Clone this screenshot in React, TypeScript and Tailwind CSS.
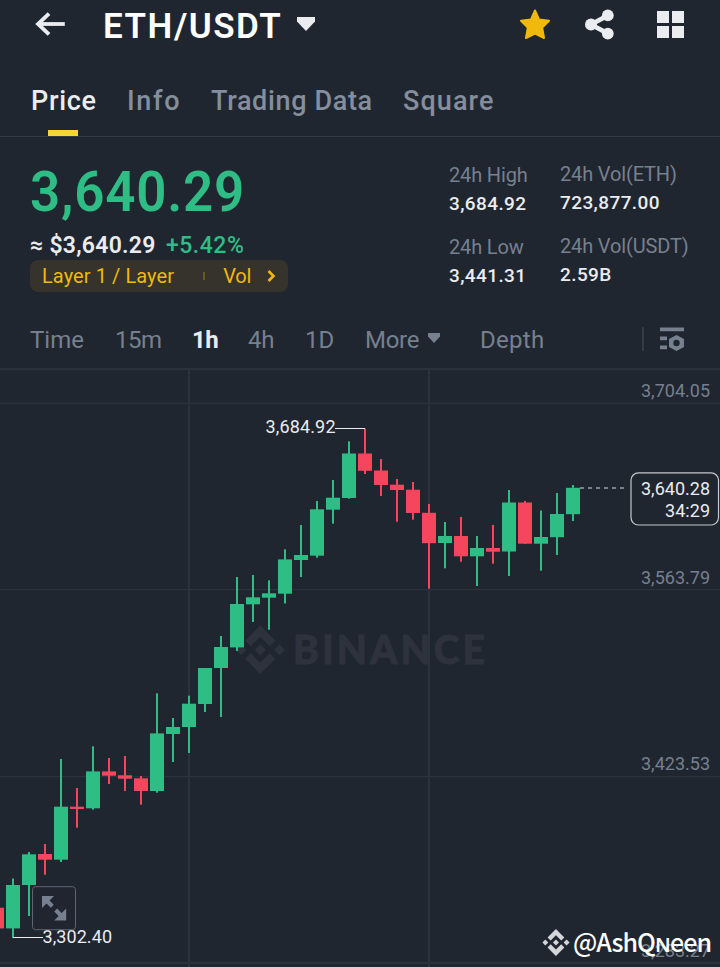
import React from 'react';

type Candle = { x: number; top: number; bottom: number; high: number; low: number; up: boolean };

const UP = '#2ebd85';
const DOWN = '#f6465d';

// x, body top, body bottom, wick top, wick bottom, rising
const RAW: [number, number, number, number, number, boolean][] = [
    [-3, 907.7, 928.4, 907.7, 928.4, false],
    [13, 885, 928.4, 878.5, 938, true],
    [29, 854.3, 885, 852, 916, true],
    [45, 854, 859.7, 844, 874.7, false],
    [61, 806.7, 859.7, 759, 862, true],
    [77, 806.7, 809, 788, 827.7, false],
    [93, 771.4, 808.3, 746.3, 809.7, true],
    [109, 771.4, 775.7, 758, 784, false],
    [125, 775.3, 778.7, 756, 791, false],
    [141, 778.3, 791, 776, 804.7, false],
    [157, 733.4, 791, 693.3, 792.7, true],
    [173, 727, 734, 718, 762, true],
    [189, 703.7, 727, 695.7, 753, true],
    [205, 668, 704, 668, 712, true],
    [221, 647, 668, 636, 717, true],
    [237, 604, 647.4, 577, 651, true],
    [253, 597.3, 604.3, 575, 622, true],
    [269, 593.3, 597.7, 580.3, 629.7, true],
    [285, 559.4, 593.7, 549.3, 603.5, true],
    [301, 555, 560, 525, 577, true],
    [317, 509.3, 555.7, 501, 557.7, true],
    [333, 497.7, 509.7, 480, 523.7, true],
    [349, 453.5, 498, 441.3, 498.7, true],
    [365, 453.5, 470.8, 428.5, 474, false],
    [381, 470.5, 485, 459, 496, false],
    [397, 484.7, 490, 479, 521.7, false],
    [413, 489.7, 513, 482, 519.7, false],
    [429, 512.8, 543.2, 504, 588.7, false],
    [445, 536, 543, 522, 568.3, true],
    [461, 536, 556.3, 517, 561.7, false],
    [477, 548, 556.3, 536, 586, true],
    [493, 548, 551.7, 525, 563.7, false],
    [509, 502.5, 551.5, 490, 576, true],
    [525, 502.5, 543.7, 501, 543.7, false],
    [541, 537, 543.7, 510.5, 570.7, true],
    [557, 514, 537.2, 493, 555, true],
    [573, 487.8, 514.2, 485, 521, true],
];

const candles: Candle[] = RAW.map(([x, top, bottom, high, low, up]) => ({ x, top, bottom, high, low, up }));

const StatItem: React.FC<{ label: string; value: string }> = ({ label, value }) => (
    <div className="whitespace-nowrap">
        <p className="text-[20px] leading-[28px] tracking-[-0.15px] text-[#76808f]">{label}</p>
        <p className="pt-px text-[19px] leading-[27px] font-medium tracking-[0.4px] text-[#eaecef]">{value}</p>
    </div>
);

// Binance diamond, drawn in a 48x48 box
const Diamond: React.FC = () => (
    <>
        <path d="M24 0 L39 15 L33.4 20.6 L24 11.2 L14.6 20.6 L9 15Z" />
        <path d="M24 48 L39 33 L33.4 27.4 L24 36.8 L14.6 27.4 L9 33Z" />
        <path d="M24 18.6 L29.4 24 L24 29.4 L18.6 24Z" />
        <path d="M5 18.8 L0 24 L5 29.4 L10.2 24Z" />
        <path d="M43 18.8 L48.4 24 L43 29.4 L37.8 24Z" />
    </>
);

const Header: React.FC = () => (
    <header className="flex h-[52px] items-center pl-[35px] pr-9">
        <svg width="30" height="24" viewBox="0 0 30 24" fill="none" stroke="#eaecef" strokeWidth="3.8" className="mb-1">
            <path d="M29.8 12H3" />
            <path d="M14 1.6L3 12L14 22.4" />
        </svg>
        <h1 className="ml-[38px] w-[194px] whitespace-nowrap text-[35px] leading-none font-semibold tracking-[1.5px] text-white">ETH/USDT</h1>
        <svg width="18" height="14" viewBox="0 0 18 14" fill="#eaecef" className="mb-1">
            <path d="M0 0H18V4.5L9 14L0 4.5Z" />
        </svg>
        <div className="mb-1 ml-auto flex items-center">
            <svg width="30" height="31" viewBox="0 0 30 31" fill="#f0b90b" stroke="#f0b90b" strokeWidth="2" strokeLinejoin="round">
                <path d="M15 1.5L19 10.5L29 11.8L22.2 18.6L24 29L15 24.6L6 29L7.8 18.6L1 11.8L11 10.5Z" />
            </svg>
            <svg width="30" height="31" viewBox="0 0 30 31" fill="#eaecef" className="ml-[35px]">
                <path d="M6 15.5L23 6.4M6 15.5L23 24.6" stroke="#eaecef" strokeWidth="4.6" />
                <circle cx="6" cy="15.5" r="6" />
                <circle cx="22.8" cy="6.4" r="5.9" />
                <circle cx="22.8" cy="24.6" r="5.9" />
            </svg>
            <div className="ml-[42px] grid grid-cols-2 gap-[3px]">
                <i className="h-3 w-3 bg-[#eaecef]" />
                <i className="h-3 w-3 bg-[#eaecef]" />
                <i className="h-3 w-3 bg-[#eaecef]" />
                <i className="h-3 w-3 bg-[#eaecef]" />
            </div>
        </div>
    </header>
);

const Tabs: React.FC = () => (
    <nav className="flex h-[85px] items-start border-b border-[#333b47] pl-[31px] text-[27px] leading-[36px] font-medium whitespace-nowrap text-[#848e9c]">
        <div className="flex h-[84px] w-[96px] flex-col pt-[31px] text-[#eaecef]">
            <span className="tracking-[0.7px]">Price</span>
            <span className="mt-[11px] ml-[17px] h-1.5 w-[30px] bg-[#fcd535]" />
        </div>
        <span className="w-[84px] pt-[31px] tracking-[1.7px]">Info</span>
        <span className="w-[192px] pt-[31px] tracking-[0.65px]">Trading Data</span>
        <span className="pt-[31px] tracking-[1.1px]">Square</span>
    </nav>
);

const Summary: React.FC = () => (
    <section className="flex h-[173px] pl-[30px]">
        <div className="w-[419px] whitespace-nowrap">
            <p className="mt-[25px] origin-left scale-x-[0.945] text-[56px] leading-[60px] font-semibold tracking-[0.8px] text-[#2ebd85]">3,640.29</p>
            <p className="mt-[10px] flex text-[23px] leading-[28px] font-semibold">
                <span className="w-[136px] tracking-[0.25px] text-[#eaecef]">≈ $3,640.29</span>
                <span className="font-medium tracking-[0.5px] text-[#2ebd85]">+5.42%</span>
            </p>
            <div className="flex h-8 w-[258px] items-center rounded-lg bg-[#35332c] px-3 text-[20px] leading-none text-[#f0b90b]">
                <span className="w-[162px] tracking-[0.08px]">Layer 1 / Layer</span>
                <span className="h-2 w-0.5 bg-[#6b5720]" />
                <span className="ml-[18px] w-[44px] tracking-[-0.2px]">Vol</span>
                <svg width="9" height="12" viewBox="0 0 9 12" fill="none" stroke="#f0b90b" strokeWidth="2.6">
                    <path d="M1.5 1L6.5 6L1.5 11" />
                </svg>
            </div>
        </div>
        <div className="flex w-[111px] flex-col gap-4 pt-6">
            <StatItem label="24h High" value="3,684.92" />
            <StatItem label="24h Low" value="3,441.31" />
        </div>
        <div className="flex flex-col gap-4 pt-[23px]">
            <StatItem label="24h Vol(ETH)" value="723,877.00" />
            <StatItem label="24h Vol(USDT)" value="2.59B" />
        </div>
    </section>
);

const Intervals: React.FC = () => (
    <div className="flex h-[58px] items-center pt-px pl-[30px] text-[24px] leading-[28px] whitespace-nowrap text-[#76808f]">
        <span className="w-[85px]">Time</span>
        <span className="w-[77px] tracking-[-0.5px]">15m</span>
        <span className="w-[56px] font-bold tracking-[-0.5px] text-[#eaecef]">1h</span>
        <span className="w-[57px] tracking-[-0.3px]">4h</span>
        <span className="w-[60px]">1D</span>
        <span className="w-[63px] tracking-[-0.3px]">More</span>
        <svg width="12" height="10" viewBox="0 0 12 10" fill="#76808f" className="mb-1">
            <path d="M0 0H12V3.4L6 10L0 3.4Z" />
        </svg>
        <span className="ml-[40px] w-[162px] tracking-[0.3px]">Depth</span>
        <span className="mb-0.5 h-6 w-0.5 bg-[#333b47]" />
        <svg width="24" height="24" viewBox="0 0 24 24" fill="#76808f" className="mb-px ml-4">
            <path d="M0 0.5H24V4.3H0Z M0 9.5H7V13.3H0Z M0 18.5H7V22.3H0Z" />
            <path fillRule="evenodd" d="M16.5 8L24 12V20L16.5 24L9 20V12Z M16.5 12.8A3.2 3.2 0 1 0 16.5 19.2A3.2 3.2 0 1 0 16.5 12.8Z" />
        </svg>
    </div>
);

const Chart: React.FC = () => (
    <svg width="720" height="599" viewBox="0 368 720 599" className="block" fontFamily="Roboto, sans-serif" fontSize="18">
        <g fill="#2c323d">
            <rect x="0" y="368" width="720" height="2" />
            <rect x="0" y="402.5" width="720" height="1.7" />
            <rect x="0" y="589" width="720" height="1.2" />
            <rect x="0" y="776" width="720" height="1.2" />
            <rect x="0" y="962" width="720" height="2" />
            <rect x="188" y="370" width="2" height="597" />
            <rect x="428" y="370" width="2" height="597" />
        </g>

        <g fill="#2e323d">
            <g transform="translate(236 625.5) scale(1.01)">
                <Diamond />
            </g>
            <text x="293" y="664" fontFamily="Lato, sans-serif" fontWeight="900" fontSize="39" textLength="192" stroke="#2e323d" strokeWidth="0.8">BINANCE</text>
        </g>

        {candles.map((c) => (
            <g key={c.x} fill={c.up ? UP : DOWN}>
                <rect x={c.x - 1} y={c.high} width="2" height={c.low - c.high} />
                <rect x={c.x - 7} y={c.top} width="14" height={c.bottom - c.top} />
            </g>
        ))}

        {/* High and low markers */}
        <path d="M335 428.5H365M13 937.5H43" stroke="#eaecef" />
        <text x="265.5" y="433" fill="#eaecef" textLength="70">3,684.92</text>
        <text x="42.5" y="943" fill="#eaecef" textLength="69.5">3,302.40</text>

        {/* Price scale */}
        <g fill="#76808f">
            <text x="641" y="397" textLength="69">3,704.05</text>
            <text x="641" y="584" textLength="69">3,563.79</text>
            <text x="641" y="770" textLength="69">3,423.53</text>
            <text x="641" y="957" textLength="69">3,283.27</text>
        </g>

        {/* Last price */}
        <path d="M580 488H624" stroke="#9a9fa8" strokeWidth="1.6" strokeDasharray="4 4" />
        <rect x="631" y="472.8" width="87.5" height="52.2" rx="7.5" fill="#202630" stroke="#c4c7cc" strokeWidth="1.2" />
        <text x="641" y="495" fill="#eaecef" textLength="69">3,640.28</text>
        <text x="665" y="517" fill="#eaecef" textLength="45">34:29</text>

        {/* Expand button */}
        <rect x="32.5" y="886.7" width="43" height="43" rx="3" fill="#202630" fillOpacity="0.8" stroke="#5c6574" />
        <g fill="#76808f" stroke="#76808f" strokeWidth="4.2">
            <path d="M42 896H54L42 908Z" stroke="none" />
            <path d="M45 899L52.3 906.3" />
            <path d="M66.2 920.6H54.2L66.2 908.6Z" stroke="none" />
            <path d="M63 917.4L55.7 910.1" />
        </g>

        {/* Author tag */}
        <g transform="translate(542.5 929) scale(0.56)" fill="#d5d6d9">
            <Diamond />
        </g>
        <text x="573" y="952" fill="#fff" fontFamily="'Noto Sans CJK SC', 'Noto Sans', sans-serif" fontWeight="500" fontSize="25" textLength="139">@AshQɴeen</text>
    </svg>
);

const App: React.FC = () => (
    <main className="h-[967px] w-[720px] overflow-hidden bg-[#202630] font-[Roboto,sans-serif]">
        <Header />
        <Tabs />
        <Summary />
        <Intervals />
        <Chart />
    </main>
);

export default App;
